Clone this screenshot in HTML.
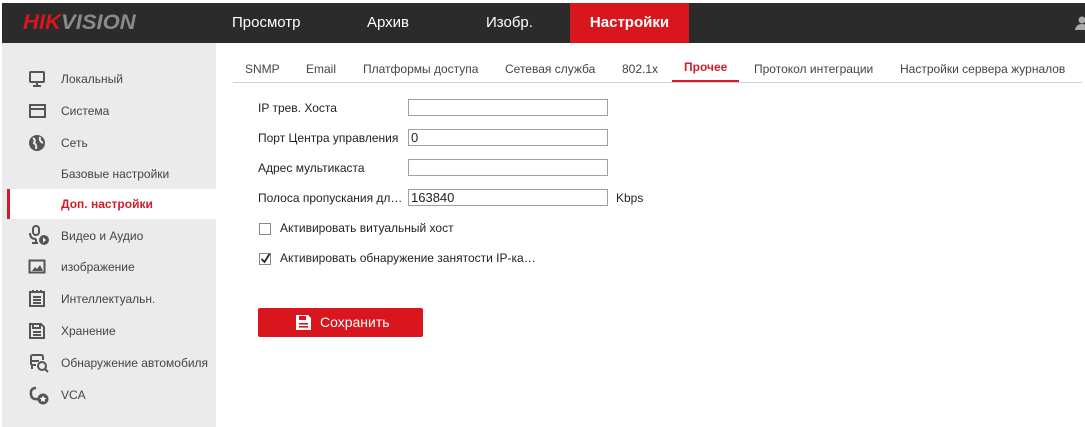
<!DOCTYPE html>
<html><head><meta charset="utf-8"><style>
*{margin:0;padding:0;box-sizing:border-box}
body{width:1085px;height:427px;overflow:hidden;background:#fff;font-family:"Liberation Sans",Arial,sans-serif;position:relative;color:#333}
.top{position:absolute;left:2px;top:3px;width:1083px;height:40px;background:#2b2b2b}
.logo{position:absolute;left:21px;top:8px;font-size:21px;font-weight:bold;font-style:italic;letter-spacing:0px;transform:scaleX(1.05);transform-origin:left}
.logo .r{color:#d9161d}.logo .g{color:#8a8a8a}
.nav{position:absolute;top:0;height:40px;line-height:40px;color:#fff;font-size:15px}
.navact{background:#d9161d;font-weight:bold;text-align:center}
.side{position:absolute;left:2px;top:43px;width:214px;height:384px;background:#ebebeb}
.it{position:absolute;left:61px;font-size:12px;color:#444;line-height:16px}
.ic{position:absolute;left:28px}
.act{position:absolute;left:7px;top:189px;width:209px;height:30px;background:#fff;border-left:3px solid #d11c2a}
.tab{position:absolute;top:62px;font-size:12px;color:#444}
.line{position:absolute;left:233px;top:82px;width:849px;height:1px;background:#d0d0d0}
.lab{position:absolute;left:258px;font-size:12px;color:#222}
.inp{position:absolute;left:408px;width:200px;height:17px;border:1px solid #a0a0a0;font-size:13px;padding-left:2px;line-height:15px;color:#222}
.cb{position:absolute;left:259px;width:12px;height:12px;border:1px solid #888;background:#fff}
.btn{position:absolute;left:258px;top:308px;width:165px;height:29px;background:#d9161d;border-radius:2px;color:#fff;font-size:14px;line-height:29px}
</style></head><body>
<div class="top">
<div class="logo"><span class="r">HIK</span><span class="g">VISION</span></div>
<div class="nav" style="left:230px">Просмотр</div>
<div class="nav" style="left:365px">Архив</div>
<div class="nav" style="left:484px">Изобр.</div>
<div class="nav navact" style="left:568px;width:119px">Настройки</div>
<svg style="position:absolute;left:1073px;top:13px" width="10" height="14"><circle cx="7" cy="4" r="3.5" fill="#aaa"/><path d="M0 14 Q1 8 7 8 Q13 8 13 14Z" fill="#aaa"/></svg>
</div>
<div class="side"></div>
<div class="act"></div>
<svg class="ic" style="top:70px" width="18" height="18" fill="none" stroke="#555" stroke-width="2"><rect x="2" y="2" width="14" height="10" rx="1"/><path d="M9 12v3M5 16h8"/></svg>
<div class="it" style="top:71px">Локальный</div>
<svg class="ic" style="top:103px" width="18" height="16" fill="none" stroke="#555" stroke-width="2"><rect x="2" y="2" width="15" height="12"/><path d="M2 6h15"/></svg>
<div class="it" style="top:103px">Система</div>
<svg class="ic" style="top:134px" width="18" height="18"><circle cx="9" cy="9" r="8" fill="#555"/><path d="M5 4 Q8 6 6 9 Q9 11 8 15 M12 3 Q11 7 15 9" stroke="#ebebeb" stroke-width="2" fill="none"/></svg>
<div class="it" style="top:135px">Сеть</div>
<div class="it" style="top:166px">Базовые настройки</div>
<div class="it" style="top:196px;color:#d11c2a;font-weight:bold">Доп. настройки</div>
<svg class="ic" style="top:225px" width="22" height="20"><rect x="5" y="1" width="6" height="9" rx="3" fill="none" stroke="#555" stroke-width="2"/><path d="M2 8 Q2 14 8 14 M8 14v4M4 18h6" stroke="#555" stroke-width="2" fill="none"/><circle cx="16" cy="15" r="5" fill="#555"/><path d="M15 12.5l3 2.5-3 2.5z" fill="#fff"/></svg>
<div class="it" style="top:228px">Видео и Аудио</div>
<svg class="ic" style="top:259px" width="18" height="16"><rect x="1.5" y="1.5" width="15" height="12" fill="none" stroke="#555" stroke-width="2"/><path d="M4 12l3-4 2 2 3-4 3 6z" fill="#555"/></svg>
<div class="it" style="top:259px">изображение</div>
<svg class="ic" style="top:289px" width="18" height="18" fill="none" stroke="#555" stroke-width="2"><rect x="2" y="3" width="14" height="14"/><path d="M5 1v3M9 1v3M13 1v3M5 8h8M5 11h8M5 14h8"/></svg>
<div class="it" style="top:291px">Интеллектуальн.</div>
<svg class="ic" style="top:322px" width="18" height="18" fill="none" stroke="#555" stroke-width="2"><path d="M2 2h11l3 3v11H2z"/><path d="M5 2v4h7V2M5 10h8M5 13h8"/></svg>
<div class="it" style="top:323px">Хранение</div>
<svg class="ic" style="top:353px" width="22" height="20" fill="none" stroke="#555" stroke-width="2"><path d="M3 12V4Q3 2 5 2h8q2 0 2 2v3M3 8h8M3 12h5M4 12v4"/><circle cx="14" cy="13" r="4"/><path d="M17 16l3 3"/></svg>
<div class="it" style="top:355px">Обнаружение автомобиля</div>
<svg class="ic" style="top:385px" width="22" height="20"><path d="M8 3 Q2 3 3 10 Q4 15 10 14" stroke="#555" stroke-width="2.5" fill="none"/><circle cx="15" cy="14" r="5.5" fill="#555"/><path d="M15 10.5l1 2.3 2.4.2-1.8 1.6.5 2.4-2.1-1.2-2.1 1.2.5-2.4-1.8-1.6 2.4-.2z" fill="#fff"/></svg>
<div class="it" style="top:387px">VCA</div>

<div class="tab" style="left:245px">SNMP</div>
<div class="tab" style="left:306px">Email</div>
<div class="tab" style="left:363px">Платформы доступа</div>
<div class="tab" style="left:505px">Сетевая служба</div>
<div class="tab" style="left:622px">802.1x</div>
<div class="tab" style="left:684px;color:#d11c2a;font-weight:bold;top:60px">Прочее</div>
<div class="tab" style="left:754px">Протокол интеграции</div>
<div class="tab" style="left:900px">Настройки сервера журналов</div>
<div class="line"></div>
<div style="position:absolute;left:672px;top:80px;width:67px;height:2px;background:#d11c2a"></div>

<div class="lab" style="top:101px">IP трев. Хоста</div><div class="inp" style="top:99px"></div>
<div class="lab" style="top:131px">Порт Центра управления</div><div class="inp" style="top:129px">0</div>
<div class="lab" style="top:161px">Адрес мультикаста</div><div class="inp" style="top:159px"></div>
<div class="lab" style="top:191px">Полоса пропускания дл…</div><div class="inp" style="top:189px">163840</div>
<div class="lab" style="left:616px;top:191px">Kbps</div>
<div class="cb" style="top:223px"></div><div class="lab" style="left:280px;top:221px">Активировать витуальный хост</div>
<div class="cb" style="top:253px"></div>
<svg style="position:absolute;left:259px;top:252px" width="13" height="13"><path d="M2.5 7l3 3 5-8" stroke="#222" stroke-width="1.8" fill="none"/></svg>
<div class="lab" style="left:280px;top:251px">Активировать обнаружение занятости IP-ка…</div>
<div class="btn">
<svg style="position:absolute;left:38px;top:7px" width="15" height="15"><path d="M0 0h12l3 3v12H0z" fill="#fff"/><rect x="3" y="1" width="7" height="4" fill="#d9161d"/><rect x="3" y="8" width="9" height="1.6" fill="#d9161d"/><rect x="3" y="11" width="9" height="1.6" fill="#d9161d"/></svg>
<span style="position:absolute;left:62px">Сохранить</span></div>
</body></html>
